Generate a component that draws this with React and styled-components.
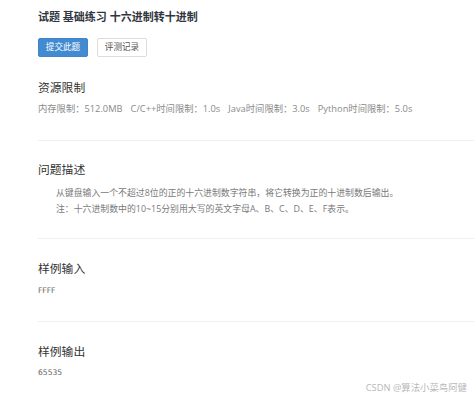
import React from "react";
import styled, { createGlobalStyle } from "styled-components";

const GlobalStyle = createGlobalStyle`
  html, body {
    margin: 0;
    padding: 0;
    background: #ffffff;
  }
  body {
    font-family: "Open Sans", "Noto Sans CJK SC", sans-serif;
    color: #333;
  }
`;

const Page = styled.div`
  position: relative;
  width: 474px;
  height: 397px;
  overflow: hidden;
  background: #fff;
`;

const Main = styled.div`
  padding-left: 38px;
`;

const Header = styled.div`
  padding-top: 9px;
`;

const Title = styled.h1`
  margin: 0;
  font-size: 11px;
  line-height: 16px;
  font-weight: 700;
  color: #2f3640;
`;

const ButtonRow = styled.div`
  display: flex;
  gap: 9px;
  margin-top: 13px;
`;

const Button = styled.button`
  box-sizing: border-box;
  height: 19px;
  width: ${(p) => p.$w}px;
  padding: 0;
  border-radius: 2px;
  font-family: "Open Sans", "Noto Sans CJK SC", sans-serif;
  font-size: 8.6px;
  line-height: 17px;
  border: 1px solid ${(p) => (p.$primary ? "#3e86cc" : "#dcdcdc")};
  background: ${(p) => (p.$primary ? "#428bd0" : "#ffffff")};
  color: ${(p) => (p.$primary ? "#ffffff" : "#555")};
`;

const Section = styled.section`
  padding-top: ${(p) => p.$pt}px;
  padding-bottom: ${(p) => p.$pb}px;
  border-bottom: ${(p) => (p.$last ? "none" : "1px solid #efefef")};
`;

const Heading = styled.h2`
  margin: 0 0 ${(p) => p.$mb}px;
  font-size: 11.8px;
  line-height: 16px;
  font-weight: 400;
  color: #333;
`;

const Limits = styled.div`
  display: flex;
  gap: 8px;
  font-size: 9.3px;
  line-height: 14px;
  color: #8a8a8a;
  white-space: nowrap;
`;

const Desc = styled.div`
  padding-left: 18px;
  font-size: 8.9px;
  line-height: 16px;
  color: #7a7a7a;
`;

const Sample = styled.pre`
  margin: 0;
  font-family: "DejaVu Sans", sans-serif;
  font-size: 7.6px;
  line-height: 12px;
  color: #666;
`;

const Watermark = styled.div`
  position: absolute;
  right: 7px;
  top: 381px;
  font-size: 9.4px;
  line-height: 14px;
  color: #b8b8b8;
  white-space: nowrap;
`;

export default function App() {
  return (
    <Page>
      <GlobalStyle />
      <Main>
        <Header>
          <Title>试题 基础练习 十六进制转十进制</Title>
          <ButtonRow>
            <Button $primary $w={50}>提交此题</Button>
            <Button $w={50}>评测记录</Button>
          </ButtonRow>
        </Header>
        <Section $pt={22} $pb={24}>
          <Heading $mb={7}>资源限制</Heading>
          <Limits>
            <span>内存限制：512.0MB</span>
            <span>C/C++时间限制：1.0s</span>
            <span>Java时间限制：3.0s</span>
            <span>Python时间限制：5.0s</span>
          </Limits>
        </Section>
        <Section $pt={20} $pb={21}>
          <Heading $mb={8}>问题描述</Heading>
          <Desc>
            <div>从键盘输入一个不超过8位的正的十六进制数字符串，将它转换为正的十进制数后输出。</div>
            <div>注：十六进制数中的10~15分别用大写的英文字母A、B、C、D、E、F表示。</div>
          </Desc>
        </Section>
        <Section $pt={21} $pb={24}>
          <Heading $mb={9}>样例输入</Heading>
          <Sample>FFFF</Sample>
        </Section>
        <Section $pt={21} $pb={0} $last>
          <Heading $mb={8}>样例输出</Heading>
          <Sample>65535</Sample>
        </Section>
      </Main>
      <Watermark>CSDN @算法小菜鸟阿健</Watermark>
    </Page>
  );
}
